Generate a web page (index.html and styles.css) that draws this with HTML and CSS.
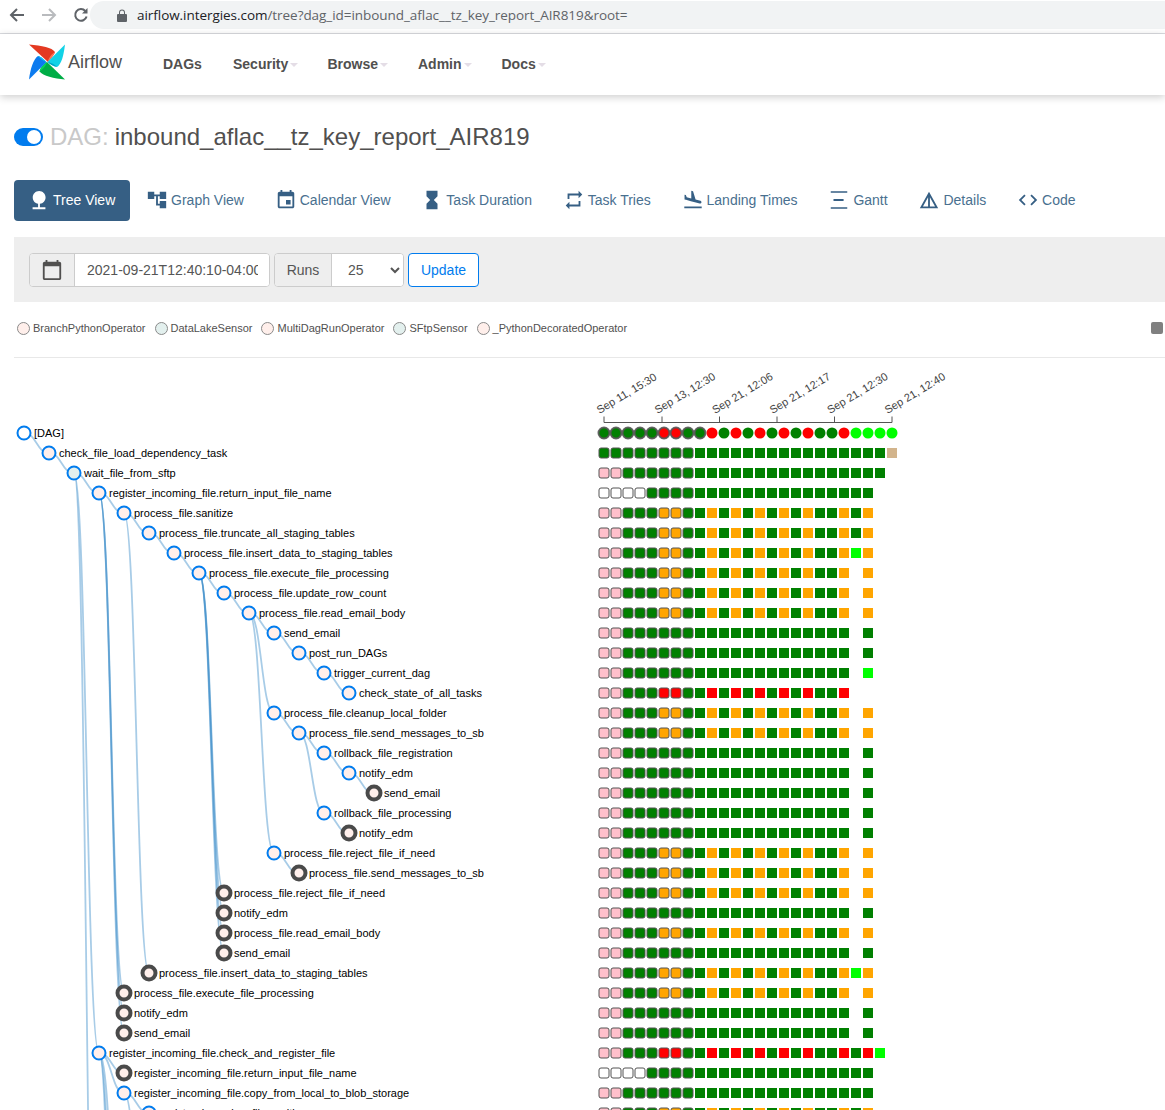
FILE: index.html
```html
<!DOCTYPE html>
<html lang="en">
<head>
<meta charset="utf-8">
<title>inbound_aflac__tz_key_report_AIR819 - Tree</title>
<link rel="stylesheet" href="styles.css">
</head>
<body>
<div class="chrome">
  <div class="chrome-btns">
    <svg class="chrome-icon" viewBox="0 0 16 16"><path class="ci-dark" d="M15 8H2M8 2L2 8l6 6"/></svg>
    <svg class="chrome-icon" viewBox="0 0 16 16"><path class="ci-light" d="M1 8h13M8 2l6 6-6 6"/></svg>
    <svg class="chrome-icon" viewBox="0 0 16 16"><path class="ci-dark" d="M13.6 9.5A5.8 5.8 0 1 1 12.3 4"/><path class="ci-fill" d="M14.5 1v5.6H9z"/></svg>
  </div>
  <div class="omnibox">
    <svg class="lock" viewBox="0 0 10 13"><path class="ci-fill" d="M1 5h1V3.4a3 3 0 0 1 6 0V5h1a1 1 0 0 1 1 1v6a1 1 0 0 1-1 1H1a1 1 0 0 1-1-1V6a1 1 0 0 1 1-1zm2 0h4V3.4a2 2 0 0 0-4 0z"/></svg>
    <span class="url"><span class="url-host">airflow.intergies.com</span>/tree?dag_id=inbound_aflac__tz_key_report_AIR819&amp;root=</span>
  </div>
</div>

<nav class="nav">
  <a class="brand">
    <svg class="brand-mark" viewBox="0 0 38 36">
      <path class="b-red" d="M1 0.5 20 18c1.500-2.500 6-6.500 7-10C24 3.500 14 1.500 1 0.5z"/>
      <path class="b-red-2" d="M20 18c1.500-2.500 6-6.500 7-10c-3 2-6.500 5.500-7 10z"/>
      <path class="b-cyan" d="M37 0.500 19.500 18c2 1.800 6 4.500 9.500 5C33.500 20 35.500 12 37 .5z"/>
      <path class="b-cyan-2" d="M19.500 18c2 1.800 6 4.500 9.500 5c-2-2.500-6-4.500-9.500-5z"/>
      <path class="b-green" d="M37 35.500 19 18c-3 2-6.500 5.500-7.500 9.500C15 32 26 34.500 37 35.500z"/>
      <path class="b-green-2" d="M19 18c-3 2-6.500 5.500-7.500 9.500c3-2 6.500-5.500 7.500-9.500z"/>
      <path class="b-blue" d="M1 35.500 18.500 18c-2-1.900-5.500-5.500-8.500-6C5 15.500 2.500 25 1 35.500z"/>
      <path class="b-blue-2" d="M18.500 18c-2-1.900-5.500-5.500-8.500-6c2 2.500 5.500 5 8.500 6z"/>
    </svg>
    <span class="brand-name">Airflow</span>
  </a>
  <ul class="menu">
    <li class="menu-item menu-dags">DAGs</li>
    <li class="menu-item menu-security has-caret">Security</li>
    <li class="menu-item menu-browse has-caret">Browse</li>
    <li class="menu-item menu-admin has-caret">Admin</li>
    <li class="menu-item has-caret">Docs</li>
  </ul>
</nav>

<main class="main">
  <h2 class="title">
    <span class="switch"><span class="knob"></span></span>
    <span class="title-label">DAG:</span>
    <span class="title-name">inbound_aflac__tz_key_report_AIR819</span>
  </h2>

  <ul class="pills">
    <li class="pill active"><svg class="pill-icon" viewBox="0 0 24 24"><path d="M13 16.12c3.47-.41 6.17-3.36 6.17-6.95 0-3.87-3.13-7-7-7s-7 3.13-7 7c0 3.47 2.52 6.34 5.83 6.89V20H5v2h14v-2h-6v-3.88z"/></svg>Tree View</li>
    <li class="pill"><svg class="pill-icon" viewBox="0 0 24 24"><path d="M22 11V3h-7v3H9V3H2v8h7V8h2v10h4v3h7v-8h-7v3h-2V8h2v3z"/></svg>Graph View</li>
    <li class="pill"><svg class="pill-icon" viewBox="0 0 24 24"><path d="M17 12h-5v5h5v-5zM16 1v2H8V1H6v2H5c-1.110 0-1.990.9-1.990 2L3 19c0 1.100.89 2 2 2h14c1.100 0 2-.9 2-2V5c0-1.100-.9-2-2-2h-1V1h-2zm3 18H5V8h14v11z"/></svg>Calendar View</li>
    <li class="pill"><svg class="pill-icon" viewBox="0 0 24 24"><path d="M6 2v6h.01L6 8.010 10 12l-4 4 .01.01H6V22h12v-5.990h-.01L18 16l-4-4 4-3.990-.01-.01H18V2H6z"/></svg>Task Duration</li>
    <li class="pill"><svg class="pill-icon" viewBox="0 0 24 24"><path d="M7 7h10v3l4-4-4-4v3H5v6h2V7zm10 10H7v-3l-4 4 4 4v-3h12v-6h-2v4z"/></svg>Task Tries</li>
    <li class="pill"><svg class="pill-icon" viewBox="0 0 24 24"><path d="M2.500 19h19v2h-19v-2zm7.180-5.730l4.350 1.160 5.310 1.420c.8.210 1.620-.26 1.840-1.060.21-.8-.26-1.620-1.060-1.840l-5.310-1.420-2.760-9.020L10.120 2v8.280L5.150 8.950l-.93-2.320-1.450-.39v5.170l1.600.43 5.310 1.430z"/></svg>Landing Times</li>
    <li class="pill"><svg class="pill-icon" viewBox="0 0 24 24"><path d="M3 2.500h18V4H3zM3 20h18v1.500H3zM6 11h11v2H6z"/></svg>Gantt</li>
    <li class="pill"><svg class="pill-icon" viewBox="0 0 24 24"><path d="M12 3L2 21h20L12 3zm1 5.920L18.600 19H13V8.920zm-2 0V19H5.400L11 8.920z"/></svg>Details</li>
    <li class="pill"><svg class="pill-icon" viewBox="0 0 24 24"><path d="M9.400 16.600L4.800 12l4.600-4.600L8 6l-6 6 6 6 1.400-1.400zm5.200 0l4.600-4.600-4.600-4.600L16 6l6 6-6 6-1.400-1.400z"/></svg>Code</li>
  </ul>

  <form class="panel">
    <div class="group group-date">
      <span class="addon addon-cal"><svg class="cal-icon" viewBox="0 0 24 24"><path d="M20 3h-1V1h-2v2H7V1H5v2H4c-1.100 0-2 .9-2 2v16c0 1.100.9 2 2 2h16c1.100 0 2-.9 2-2V5c0-1.100-.9-2-2-2zm0 18H4V8h16v13z"/></svg></span>
      <input class="control date-input" type="text" value="2021-09-21T12:40:10-04:00">
    </div>
    <div class="group group-runs">
      <span class="addon addon-runs">Runs</span>
      <select class="control runs-select"><option>25</option></select>
    </div>
    <button class="update" type="button">Update</button>
  </form>

  <div class="legend">
    <div class="legend-ops">
      <span class="op"><i class="op-dot op-warm"></i>BranchPythonOperator</span>
      <span class="op"><i class="op-dot op-cool"></i>DataLakeSensor</span>
      <span class="op"><i class="op-dot op-warm"></i>MultiDagRunOperator</span>
      <span class="op"><i class="op-dot op-cool"></i>SFtpSensor</span>
      <span class="op"><i class="op-dot op-warm"></i>_PythonDecoratedOperator</span>
    </div>
    <i class="no-status"></i>
  </div>
  <hr class="rule">
</main>

<div id="tree" class="tree"></div>
<script src="tree.js"></script>
</body>
</html>
```

FILE: styles.css
```css
html, body { margin: 0; padding: 0; height: 1110px; overflow: hidden; background: #fff; }
body { font-family: "Liberation Sans", Arial, sans-serif; color: #51504f; }
ul { list-style: none; margin: 0; padding: 0; }

/* browser chrome */
.chrome { display: flex; align-items: flex-start; height: 33px; border-bottom: 1px solid #dadce0; background: #fff; box-sizing: content-box; }
.chrome-btns { display: flex; gap: 16px; padding: 7px 0 0 9px; width: 81px; box-sizing: border-box; }
.chrome-icon { width: 16px; height: 16px; flex: none; }
.ci-dark { fill: none; stroke: #5f6368; stroke-width: 2; }
.ci-light { fill: none; stroke: #b9bbbe; stroke-width: 2; }
.ci-fill { fill: #5f6368; }
.omnibox { flex: 1; height: 28px; margin: 1px 0 0 9px; padding-left: 27px; display: flex; align-items: center; background: #f1f3f4; border-radius: 14px 0 0 14px; }
.lock { width: 10px; height: 13px; margin-right: 10px; }
.url { font: 13.500px/20px "Open Sans", "Liberation Sans", sans-serif; color: #5f6368; letter-spacing: -0.05px; }
.url-host { color: #202124; }

/* nav */
.nav { display: flex; align-items: center; height: 61px; background: #fff; box-shadow: 0 2px 8px rgba(0,0,0,.2); position: relative; }
.brand { display: flex; align-items: center; margin-left: 28px; width: 135px; }
.brand-mark { width: 38px; height: 36px; margin-bottom: 5px; }
.b-red { fill: #e43921; }
.b-red-2 { fill: #ff7557; }
.b-cyan { fill: #11d2e6; }
.b-cyan-2 { fill: #00a7c4; }
.b-green { fill: #00ad46; }
.b-green-2 { fill: #04d659; }
.b-blue { fill: #0c7bef; }
.b-blue-2 { fill: #11c7ee; }
.brand-name { font-size: 18px; color: #51504f; margin: -4px 0 0 2px; }
.menu { display: flex; margin-top: -2px; }
.menu-item { font-size: 14px; font-weight: 700; color: #51504f; }
.menu-dags { width: 70px; }
.menu-security { width: 94.500px; }
.menu-browse { width: 90.500px; }
.menu-admin { width: 83.500px; }
.has-caret::after { content: ""; display: inline-block; margin-left: 2px; vertical-align: 2px; border-top: 4px solid #e4dde6; border-left: 4px solid transparent; border-right: 4px solid transparent; }

/* page */
.main { padding-left: 14px; }
.title { display: flex; align-items: center; margin: 0; height: 28px; padding-top: 28px; font-size: 24px; font-weight: 400; line-height: 28px; }
.switch { width: 29px; height: 18px; border-radius: 9px; background: #017cee; position: relative; margin-right: 7px; }
.knob { position: absolute; right: 2px; top: 2px; width: 14px; height: 14px; border-radius: 50%; background: #fff; }
.title-label { color: #c9c9c9; margin-right: 6px; }
.title-name { color: #51504f; }

.pills { display: flex; gap: 2px; margin-top: 29px; height: 41px; }
.pill { display: flex; align-items: center; gap: 3px; padding: 0 14.800px 2px 14px; box-sizing: border-box; font-size: 14px; color: #49708f; border-radius: 4px; }
.pill-icon { width: 22px; height: 22px; fill: #365f84; flex: none; }
.pill.active { background: #365f84; color: #fff; }
.pill.active .pill-icon { fill: #fff; }

.panel { display: flex; gap: 4px; align-items: center; margin-top: 16px; height: 65px; padding-left: 15px; background: #eee; }
.group { display: flex; height: 34px; box-sizing: border-box; border: 1px solid #ccc; border-radius: 4px; overflow: hidden; background: #fff; }
.group-date { width: 241px; }
.group-runs { width: 130px; }
.addon { display: flex; align-items: center; justify-content: center; background: #eee; border-right: 1px solid #ccc; font-size: 14px; color: #555; flex: none; box-sizing: border-box; }
.addon-cal { width: 45px; }
.addon-runs { width: 57px; }
.cal-icon { width: 22px; height: 22px; fill: #51504f; }
.control { border: 0; outline: 0; background: #fff; font: 14px "Liberation Sans", Arial, sans-serif; color: #555; min-width: 0; }
.date-input { width: 100%; padding: 0 11px 0 12px; box-sizing: border-box; }
.runs-select { flex: 1; padding-left: 12px; }
.update { width: 71px; height: 34px; padding: 0; border: 1px solid #017cee; border-radius: 4px; background: #fff; color: #017cee; font: 14px "Liberation Sans", Arial, sans-serif; }

.legend { display: flex; justify-content: space-between; align-items: center; height: 20px; margin-top: 16px; padding: 0 2px 0 3px; }
.legend-ops { display: flex; gap: 9px; }
.op { display: flex; align-items: center; gap: 4px; font-size: 11px; color: #51504f; }
.op-dot { width: 13px; height: 13px; border-radius: 50%; border: 1px solid #8a8a8a; box-sizing: border-box; margin-right: -1px; }
.op-warm { background: #ffefeb; }
.op-cool { background: #e3f0ee; }
.no-status { width: 12px; height: 12px; border-radius: 2px; background: #808080; }
.rule { margin: 19px 0 0; border: 0; border-top: 1px solid #e8e8e8; }

/* tree */
.tree { height: 760px; }
.tree-svg { display: block; }
.link { fill: none; stroke: #3f8fc9; stroke-opacity: .45; stroke-width: 1.800; }
.node { stroke: #017cee; stroke-width: 2; }
.node.fade { stroke: #4a4a4a; stroke-width: 4; }
.fill-dag { fill: #fff; }
.fill-warm { fill: #ffefeb; }
.fill-cool { fill: #e3f0ee; }
.node-label { font: 11px "Liberation Sans", Arial, sans-serif; fill: #000; }
.axis-line { fill: none; stroke: #555; stroke-width: 1; }
.axis-label { font: 11px "Liberation Sans", Arial, sans-serif; fill: #444; }
.run { stroke: #555; stroke-width: 2; stroke-opacity: .9; }
.cell.old { stroke: #555; stroke-width: 1; }
.s-g { fill: #008000; }
.s-r { fill: #ff0000; }
.s-o { fill: #ffa500; }
.s-l { fill: #00ff00; }
.s-p { fill: #ffc0cb; }
.s-w { fill: #fff; }
.s-t { fill: #d2b48c; }
```

FILE: tree.js
```js
(function () {
  var NS = 'http://www.w3.org/2000/svg';
  var TOP = 358;
  var svg = el('svg', { 'class': 'tree-svg', width: 1165, height: 760, viewBox: '0 ' + TOP + ' 1165 760' });
  document.getElementById('tree').appendChild(svg);

  function el(name, attrs, text) {
    var e = document.createElementNS(NS, name);
    for (var k in attrs) e.setAttribute(k, attrs[k]);
    if (text) e.textContent = text;
    return e;
  }

  /* state rows for the 25 runs */
  var A = 'ppgggoog' + 'gogogogogoggogo';
  var B = 'ppgggoog' + 'gogogogogoggolo';
  var C = 'ppgggoog' + 'gogogogogoggo.o';
  var D = 'ppgggggg' + 'ggggggggggggg.g';
  var E = 'ppgggggg' + 'ggggggggggggg.l';
  var F = 'ppgggrrg' + 'grgrgrgrgrggr';
  var G = 'ppgggrrg' + 'grgrgrgrgrggrgrl';
  var W = 'wwwwgggg' + 'ggggggggggggggg';
  var P = 'ppgggggg' + 'ggggggggggggggg';

  /* name, depth, parent row (index), faded, fill, state row */
  var rows = [
    ['[DAG]', 0, -1, 0, 'dag', null],
    ['check_file_load_dependency_task', 1, 0, 0, 'warm', 'gggggggggggggggggggggggg' + 't'],
    ['wait_file_from_sftp', 2, 1, 0, 'cool', 'ppgggggggggggggggggggggg'],
    ['register_incoming_file.return_input_file_name', 3, 2, 0, 'warm', W],
    ['process_file.sanitize', 4, 3, 0, 'warm', A],
    ['process_file.truncate_all_staging_tables', 5, 4, 0, 'warm', A],
    ['process_file.insert_data_to_staging_tables', 6, 5, 0, 'warm', B],
    ['process_file.execute_file_processing', 7, 6, 0, 'warm', C],
    ['process_file.update_row_count', 8, 7, 0, 'warm', C],
    ['process_file.read_email_body', 9, 8, 0, 'warm', C],
    ['send_email', 10, 9, 0, 'warm', D],
    ['post_run_DAGs', 11, 10, 0, 'warm', D],
    ['trigger_current_dag', 12, 11, 0, 'warm', E],
    ['check_state_of_all_tasks', 13, 12, 0, 'warm', F],
    ['process_file.cleanup_local_folder', 10, 9, 0, 'warm', C],
    ['process_file.send_messages_to_sb', 11, 14, 0, 'warm', C],
    ['rollback_file_registration', 12, 15, 0, 'warm', D],
    ['notify_edm', 13, 16, 0, 'warm', D],
    ['send_email', 14, 17, 1, 'warm', D],
    ['rollback_file_processing', 12, 15, 0, 'warm', D],
    ['notify_edm', 13, 19, 1, 'warm', D],
    ['process_file.reject_file_if_need', 10, 9, 0, 'warm', C],
    ['process_file.send_messages_to_sb', 11, 21, 1, 'warm', C],
    ['process_file.reject_file_if_need', 8, 7, 1, 'warm', C],
    ['notify_edm', 8, 7, 1, 'warm', D],
    ['process_file.read_email_body', 8, 7, 1, 'warm', C],
    ['send_email', 8, 7, 1, 'warm', D],
    ['process_file.insert_data_to_staging_tables', 5, 4, 1, 'warm', B],
    ['process_file.execute_file_processing', 4, 3, 1, 'warm', C],
    ['notify_edm', 4, 3, 1, 'warm', D],
    ['send_email', 4, 3, 1, 'warm', D],
    ['register_incoming_file.check_and_register_file', 3, 2, 0, 'warm', G],
    ['register_incoming_file.return_input_file_name', 4, 31, 1, 'warm', W],
    ['register_incoming_file.copy_from_local_to_blob_storage', 4, 31, 0, 'warm', P],
    ['register_incoming_file.sanitize', 5, 33, 0, 'warm', A]
  ];
  /* links to rows further down the page, below the fold */
  var below = [[2, 3, 1500], [31, 4, 1300], [31, 4, 1500], [31, 4, 1700], [33, 5, 1300]];

  function nx(d) { return 24 + 25 * d; }
  function ny(i) { return 433 + 20 * i; }
  function link(x1, y1, x2, y2) {
    var m = (x1 + x2) / 2;
    svg.appendChild(el('path', { 'class': 'link', d: 'M' + x1 + ' ' + y1 + 'C' + m + ' ' + y1 + ' ' + m + ' ' + y2 + ' ' + x2 + ' ' + y2 }));
  }

  /* axis */
  var ticks = [['Sep 11, 15:30', 604], ['Sep 13, 12:30', 662], ['Sep 21, 12:06', 719.500], ['Sep 21, 12:17', 777], ['Sep 21, 12:30', 834.500], ['Sep 21, 12:40', 892]];
  svg.appendChild(el('path', { 'class': 'axis-line', d: 'M604 416.500V422.500H892V416.500' }));
  ticks.forEach(function (t, i) {
    if (i > 0 && i < 5) svg.appendChild(el('path', { 'class': 'axis-line', d: 'M' + t[1] + ' 416.500V422.500' }));
    svg.appendChild(el('text', { 'class': 'axis-label', transform: 'translate(' + (t[1] - 4.500) + ' 414) rotate(-31)' }, t[0]));
  });

  /* links */
  rows.forEach(function (r, i) {
    if (r[2] >= 0) link(nx(rows[r[2]][1]), ny(r[2]), nx(r[1]), ny(i));
  });
  below.forEach(function (b) { link(nx(rows[b[0]][1]), ny(b[0]), nx(b[1]), b[2]); });

  /* top run row */
  var runs = 'gggggrrgg' + 'rgrgrgrgrgg' + 'r' + 'llll';
  runs.split('').forEach(function (s, c) {
    var a = { 'class': 's-' + s, cx: 604 + 12 * c, cy: 433, r: 5.500 };
    if (c < 9) a['class'] += ' run';
    svg.appendChild(el('circle', a));
  });

  /* nodes and cells */
  rows.forEach(function (r, i) {
    svg.appendChild(el('circle', { 'class': 'node fill-' + r[4] + (r[3] ? ' fade' : ''), cx: nx(r[1]), cy: ny(i), r: 6.500 }));
    svg.appendChild(el('text', { 'class': 'node-label', x: nx(r[1]) + 10, y: ny(i) + 4 }, r[0]));
    if (!r[5]) return;
    r[5].split('').forEach(function (s, c) {
      if (s === '.') return;
      svg.appendChild(el('rect', {
        'class': 'cell s-' + s + (c < 8 ? ' old' : ''),
        x: 599 + 12 * c, y: ny(i) - 5, width: 10, height: 10, rx: c < 8 ? 2 : 0
      }));
    });
  });
})();
```
